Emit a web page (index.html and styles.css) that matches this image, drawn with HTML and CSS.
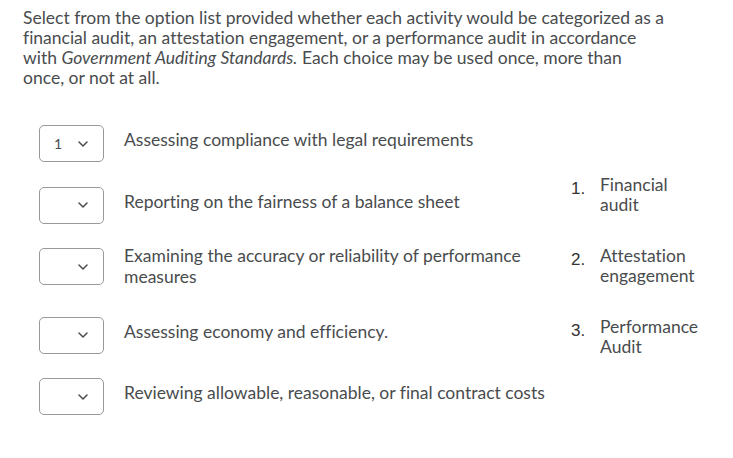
FILE: index.html
```html
<!DOCTYPE html>
<html lang="en">
<head>
    <meta charset="UTF-8">
    <title>Matching question</title>
    <link rel="stylesheet" href="styles.css">
</head>
<body>

    <!-- Question text -->
    <p class="question">
        Select from the option list provided whether each activity would be categorized as a<br>
        financial audit, an attestation engagement, or a performance audit in accordance<br>
        with <em>Government Auditing Standards.</em> Each choice may be used once, more than<br>
        once, or not at all.
    </p>

    <div class="quiz">
        <!-- Activities with a choice box each -->
        <div class="rows">
            <div class="row">
                <div class="pick">
                    <span class="pick-value">1</span>
                    <svg class="chevron" width="10" height="6" viewBox="0 0 10 6"><polyline points="1,1 5,5 9,1"/></svg>
                </div>
                <div class="label">Assessing compliance with legal requirements</div>
            </div>
            <div class="row">
                <div class="pick">
                    <span class="pick-value"></span>
                    <svg class="chevron" width="10" height="6" viewBox="0 0 10 6"><polyline points="1,1 5,5 9,1"/></svg>
                </div>
                <div class="label">Reporting on the fairness of a balance sheet</div>
            </div>
            <div class="row">
                <div class="pick">
                    <span class="pick-value"></span>
                    <svg class="chevron" width="10" height="6" viewBox="0 0 10 6"><polyline points="1,1 5,5 9,1"/></svg>
                </div>
                <div class="label">Examining the accuracy or reliability of performance measures</div>
            </div>
            <div class="row">
                <div class="pick">
                    <span class="pick-value"></span>
                    <svg class="chevron" width="10" height="6" viewBox="0 0 10 6"><polyline points="1,1 5,5 9,1"/></svg>
                </div>
                <div class="label">Assessing economy and efficiency.</div>
            </div>
            <div class="row">
                <div class="pick">
                    <span class="pick-value"></span>
                    <svg class="chevron" width="10" height="6" viewBox="0 0 10 6"><polyline points="1,1 5,5 9,1"/></svg>
                </div>
                <div class="label">Reviewing allowable, reasonable, or final contract costs</div>
            </div>
        </div>

        <!-- Choice list -->
        <ol class="choices">
            <li class="choice"><span class="num">1.</span><span class="choice-text">Financial audit</span></li>
            <li class="choice"><span class="num">2.</span><span class="choice-text">Attestation engagement</span></li>
            <li class="choice"><span class="num">3.</span><span class="choice-text">Performance Audit</span></li>
        </ol>
    </div>

</body>
</html>
```

FILE: styles.css
```css
/* General Style */
body {
    font-family: Lato, "Noto Sans", sans-serif;
    font-size: 17.5px;
    font-variant-ligatures: none;
    margin: 0;
    padding: 8px 23px;
    background-color: #ffffff;
    color: #494c4e;
}
.question {
    width: 680px;
    margin: 0;
    line-height: 20px;
}

/* Layout */
.quiz {
    display: flex;
    align-items: center;
    margin-top: 21px;
    margin-left: 16px;
}
.rows {
    width: 515px;
    flex-shrink: 0;
}

/* Activity rows */
.row {
    display: flex;
    align-items: center;
    padding: 8px 0 8.5px;
}
.pick {
    align-self: flex-start;
    margin-top: 8px;
    width: 65px;
    height: 37px;
    box-sizing: border-box;
    border: 1px solid #999;
    border-radius: 5px;
    display: flex;
    align-items: center;
    padding: 0 15px 0 14px;
    flex-shrink: 0;
}
.pick-value {
    flex: 1;
    font-size: 14px;
    color: #494c4e;
}
.chevron {
    fill: none;
    stroke: #494c4e;
    stroke-width: 1.5;
    stroke-linecap: round;
    stroke-linejoin: round;
}
.label {
    width: 430px;
    margin-left: 20px;
    padding: 5px 0;
    line-height: 21px;
}

/* Choice list */
.choices {
    list-style: none;
    margin: 0 0 0 17px;
    padding: 0;
}
.choice {
    display: flex;
    align-items: flex-start;
    line-height: 20px;
    margin-bottom: 31px;
}
.choice:last-child {
    margin-bottom: 0;
}
.num {
    width: 29px;
    flex-shrink: 0;
    padding-top: 4px;
    font-family: "Liberation Sans", Arial, sans-serif;
    font-size: 17px;
    color: #333;
}
.choice-text {
    width: 100px;
}
```
